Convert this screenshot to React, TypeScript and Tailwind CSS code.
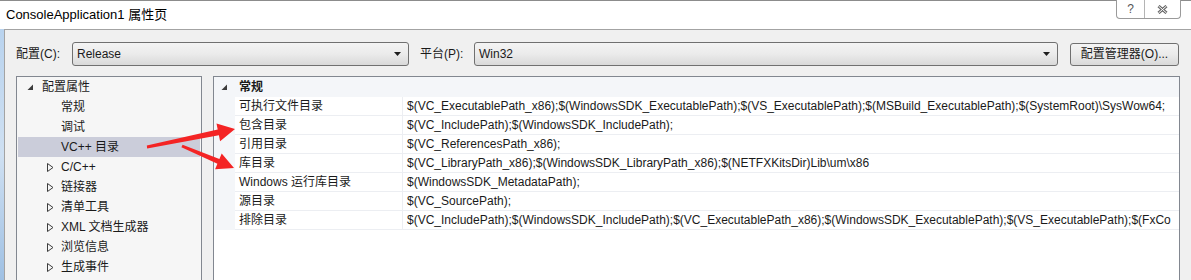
import React from "react"

const font = "font-['Liberation_Sans','Noto_Sans_CJK_SC',sans-serif]"

const tree = [
  { label: "常规", kind: "leaf" },
  { label: "调试", kind: "leaf" },
  { label: "VC++ 目录", kind: "leaf", selected: true },
  { label: "C/C++", kind: "closed" },
  { label: "链接器", kind: "closed" },
  { label: "清单工具", kind: "closed" },
  { label: "XML 文档生成器", kind: "closed" },
  { label: "浏览信息", kind: "closed" },
  { label: "生成事件", kind: "closed" },
]

const rows = [
  ["可执行文件目录", "$(VC_ExecutablePath_x86);$(WindowsSDK_ExecutablePath);$(VS_ExecutablePath);$(MSBuild_ExecutablePath);$(SystemRoot)\\SysWow64;"],
  ["包含目录", "$(VC_IncludePath);$(WindowsSDK_IncludePath);"],
  ["引用目录", "$(VC_ReferencesPath_x86);"],
  ["库目录", "$(VC_LibraryPath_x86);$(WindowsSDK_LibraryPath_x86);$(NETFXKitsDir)Lib\\um\\x86"],
  ["Windows 运行库目录", "$(WindowsSDK_MetadataPath);"],
  ["源目录", "$(VC_SourcePath);"],
  ["排除目录", "$(VC_IncludePath);$(WindowsSDK_IncludePath);$(VC_ExecutablePath_x86);$(WindowsSDK_ExecutablePath);$(VS_ExecutablePath);$(FxCo"],
]

function Opened() {
  return (
    <svg width="7" height="7" viewBox="0 0 7 7">
      <polygon points="6,0.5 6,6 0.5,6" fill="#3c3c3c" />
    </svg>
  )
}

function Closed() {
  return (
    <svg width="7" height="9" viewBox="0 0 7 9">
      <polygon points="0.5,0.5 6,4.5 0.5,8.5" fill="none" stroke="#3c3c3c" strokeWidth="1" />
    </svg>
  )
}

function DropArrow() {
  return (
    <svg width="7" height="4" viewBox="0 0 7 4">
      <polygon points="0,0 7,0 3.5,4" fill="#1e1e1e" />
    </svg>
  )
}

function Combo({ value, w }: { value: string; w: string }) {
  return (
    <div className={`${w} h-[24px] flex items-center justify-between pl-[4px] pr-[7px] border border-[#707070] rounded-[3px] bg-linear-to-b from-[#f4f4f4] via-[#ebebeb] to-[#d9d9d9]`}>
      <span>{value}</span>
      <DropArrow />
    </div>
  )
}

export default function App() {
  return (
    <div className={`relative w-[1191px] h-[280px] overflow-hidden bg-white text-[12px] text-[#1a1a1a] ${font}`}>
      {/* title bar */}
      <div className="h-[29px] border-t border-[#8c8c8c] flex items-center pl-[6px] text-[13px] text-black">
        ConsoleApplication1 属性页
      </div>

      <div className="absolute top-0 right-[10px] w-[65px] h-[19px] flex border border-t-0 border-[#9a9a9a] rounded-b-[4px] bg-white">
        <div className="w-[28px] flex items-center justify-center border-r border-[#b4b4b4] text-[12px] text-[#555]">?</div>
        <div className="flex-1 flex items-center justify-center">
          <svg width="11" height="9" viewBox="0 0 11 9">
            <path d="M1.5 1 L9.5 8 M9.5 1 L1.5 8" stroke="#6a6a6a" strokeWidth="3" />
            <path d="M1.5 1 L9.5 8 M9.5 1 L1.5 8" stroke="#ffffff" strokeWidth="1" />
          </svg>
        </div>
      </div>

      <div className="flex h-[251px]">
        <div className="w-[4px] bg-linear-to-b from-[#b9d3ee] via-[#cfe0f2] to-[#9fc0e3]" />
        <div className="flex-1 border-t border-l border-[#a3a3a3] bg-[#f0f0f0] pt-[12px] pl-[11px]">
          {/* config row */}
          <div className="flex items-center h-[24px]">
            <span className="w-[56px]">配置(C):</span>
            <Combo value="Release" w="w-[337px]" />
            <span className="ml-[11px] w-[54px]">平台(P):</span>
            <Combo value="Win32" w="w-[584px]" />
            <div className="ml-[12px] w-[109px] h-[23px] flex items-center justify-center border border-[#707070] rounded-[3px] bg-linear-to-b from-[#f4f4f4] via-[#ebebeb] to-[#d9d9d9]">
              配置管理器(O)...
            </div>
          </div>

          {/* panels */}
          <div className="flex mt-[10px] gap-[11px]">
            <div className="w-[186px] h-[220px] border border-[#828790] bg-[#f6f6f6]">
              <div className="h-[20px] flex items-center">
                <span className="w-[25px] flex justify-end pr-[8px] pt-[1px]"><Opened /></span>
                <span>配置属性</span>
              </div>
              {tree.map((t) => (
                <div key={t.label} className={`h-[20px] mx-[1px] flex items-center ${t.selected ? "bg-[#cbcdda]" : ""}`}>
                  <span className="w-[43px] flex justify-end pr-[7px]">{t.kind === "closed" ? <Closed /> : null}</span>
                  <span>{t.label}</span>
                </div>
              ))}
            </div>

            <div className="w-[967px] h-[220px] border border-[#828790] bg-white overflow-hidden">
              <div className="h-[20px] flex items-center bg-[#f4f6f9]">
                <span className="w-[14px] flex justify-end pt-[1px]"><Opened /></span>
                <span className="ml-[11px] font-bold">常规</span>
              </div>
              {rows.map(([k, v]) => (
                <div key={k} className="h-[19px] flex">
                  <div className="w-[21px] shrink-0 bg-[#f4f6f9]" />
                  <div className="w-[168px] shrink-0 flex items-center pl-[4px] border-r border-b border-[#eceef2]">{k}</div>
                  <div className="flex-1 min-w-0 flex items-center pl-[4px] border-b border-[#eceef2] whitespace-nowrap overflow-hidden">{v}</div>
                </div>
              ))}
            </div>
          </div>
        </div>
      </div>

      {/* red annotation arrows */}
      <svg className="absolute top-0 left-0 pointer-events-none" width="1191" height="280" viewBox="0 0 1191 280">
        <polygon points="147.2,148.5 218.9,135.3 220.1,141.2 235,129 216.5,123.6 217.7,129.5 146.8,145.5" fill="#f42424" />
        <polygon points="181.4,147.3 217.4,163.7 215.1,169.2 234,168 221.7,153.6 219.4,159.1 182.6,144.7" fill="#f42424" />
      </svg>
    </div>
  )
}
